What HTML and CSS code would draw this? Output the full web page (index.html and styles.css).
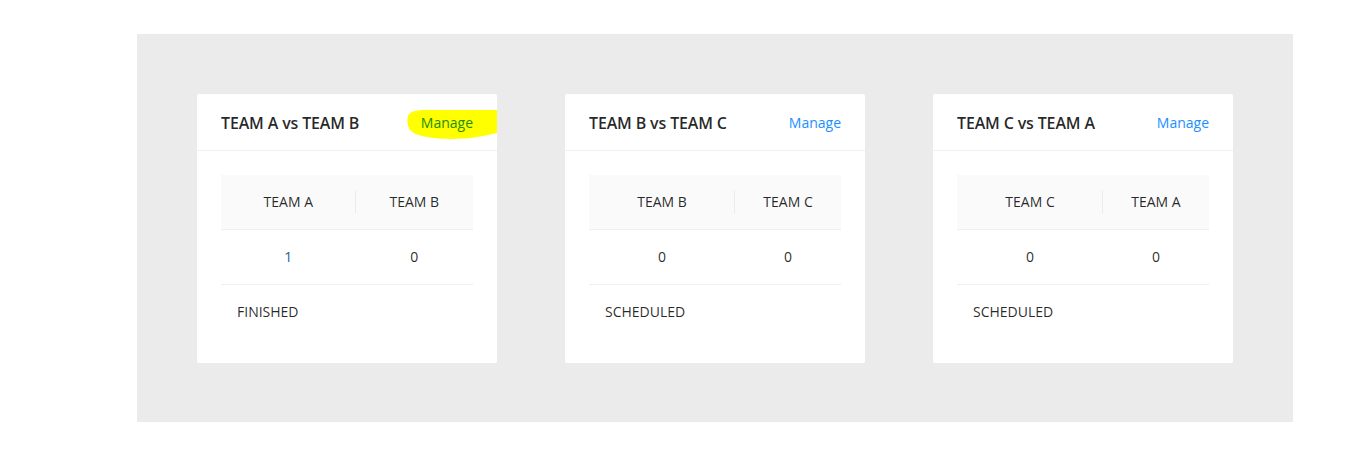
FILE: index.html
```html
<!DOCTYPE html>
<html>
<head>
<meta charset="utf-8">
<link rel="stylesheet" href="styles.css">
</head>
<body>
<div class="board">
  <div class="card">
    <div class="card-head">
      <div class="card-title">TEAM A vs TEAM B</div>
      <a class="manage highlighted">
        <svg class="blob" width="96" height="34" viewBox="0 0 96 34"><path d="M4 8 C 5 4, 12 2, 20 2 L 93 2 L 93 25 C 80 28, 65 31, 48 31 C 30 31, 10 28, 6 22 C 3 17, 3 12, 4 8 Z" fill="#ffff00"/></svg>
        <span>Manage</span>
      </a>
    </div>
    <div class="card-body">
      <table class="score">
        <thead><tr><th>TEAM A</th><th>TEAM B</th></tr></thead>
        <tbody>
          <tr class="scores"><td class="win">1</td><td>0</td></tr>
          <tr class="status"><td>FINISHED</td><td></td></tr>
        </tbody>
      </table>
    </div>
  </div>
  <div class="card">
    <div class="card-head">
      <div class="card-title">TEAM B vs TEAM C</div>
      <a class="manage"><span>Manage</span></a>
    </div>
    <div class="card-body">
      <table class="score">
        <thead><tr><th>TEAM B</th><th>TEAM C</th></tr></thead>
        <tbody>
          <tr class="scores"><td>0</td><td>0</td></tr>
          <tr class="status"><td>SCHEDULED</td><td></td></tr>
        </tbody>
      </table>
    </div>
  </div>
  <div class="card">
    <div class="card-head">
      <div class="card-title">TEAM C vs TEAM A</div>
      <a class="manage"><span>Manage</span></a>
    </div>
    <div class="card-body">
      <table class="score">
        <thead><tr><th>TEAM C</th><th>TEAM A</th></tr></thead>
        <tbody>
          <tr class="scores"><td>0</td><td>0</td></tr>
          <tr class="status"><td>SCHEDULED</td><td></td></tr>
        </tbody>
      </table>
    </div>
  </div>
</div>
</body>
</html>
```
FILE: styles.css
```css
html, body {
  margin: 0;
  padding: 0;
  background: #ffffff;
}
body {
  font-family: "Open Sans", "Noto Sans", sans-serif;
  font-size: 14px;
  color: rgba(0, 0, 0, 0.85);
}
.board {
  margin: 34px 0 0 137px;
  width: 1156px;
  height: 388px;
  box-sizing: border-box;
  padding: 60px;
  background: #ebebeb;
  display: flex;
  gap: 68px;
  align-items: flex-start;
}
.card {
  width: 300px;
  background: #ffffff;
  border-radius: 2px;
  overflow: hidden;
}
.card-head {
  height: 55px;
  padding: 1px 24px 0;
  border-bottom: 1px solid #f0f0f0;
  display: flex;
  align-items: center;
  justify-content: space-between;
}
.card-title {
  font-size: 16px;
  font-weight: 600;
  letter-spacing: -0.15px;
  color: rgba(0, 0, 0, 0.85);
}
.manage {
  position: relative;
  color: #1890ff;
  font-size: 14px;
  cursor: pointer;
}
.manage span {
  position: relative;
}
.manage.highlighted {
  color: #1a9000;
}
.blob {
  position: absolute;
  left: -17px;
  top: -5px;
}
.card-body {
  padding: 24px;
}
.score {
  width: 100%;
  border-collapse: collapse;
  table-layout: auto;
}
.score th {
  position: relative;
  background: #fafafa;
  font-weight: 500;
  padding: 16px;
  line-height: 22px;
  text-align: center;
  border-bottom: 1px solid #f0f0f0;
}
.score th:first-child::before {
  content: "";
  position: absolute;
  right: 0;
  top: 50%;
  width: 1px;
  height: 22px;
  transform: translateY(-50%);
  background: rgba(0, 0, 0, 0.06);
}
.score td {
  padding: 16px;
  line-height: 22px;
  text-align: center;
}
.scores td {
  border-bottom: 1px solid #f0f0f0;
}
.status td {
  text-align: left;
}
.win {
  color: #2c5f94;
}
```
